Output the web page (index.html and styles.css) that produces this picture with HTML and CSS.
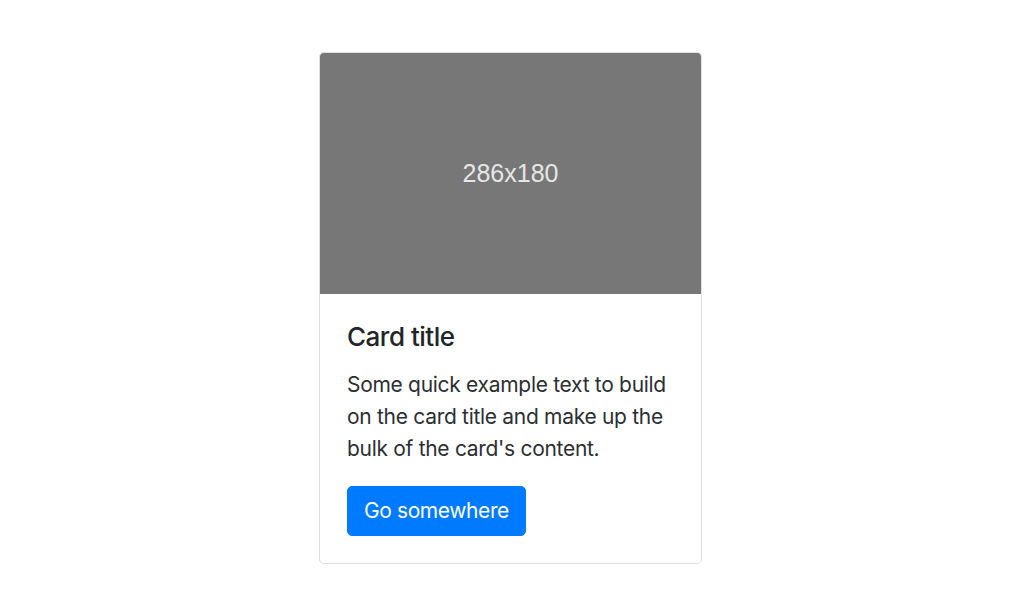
FILE: index.html
```html
<!DOCTYPE html>
<html lang="en">
<head>
    <meta charset="UTF-8">
    <meta name="viewport" content="width=device-width, initial-scale=1.0">
    <title>Card</title>
    <link rel="stylesheet" href="styles.css">
</head>
<body>

    <div class="page">
        <div class="card">
            <div class="card-img">286x180</div>
            <div class="card-body">
                <h5 class="card-title">Card title</h5>
                <p class="card-text">Some quick example text to build on the card title and make up the bulk of the card's content.</p>
                <a href="#" class="btn">Go somewhere</a>
            </div>
        </div>
    </div>

</body>
</html>
```

FILE: styles.css
```css
body {
    margin: 0;
    background-color: #fff;
    color: #212529;
    font-family: Inter, "Noto Sans", sans-serif;
}
.page {
    display: flex;
    justify-content: center;
    padding-top: 52px;
    padding-right: 3px;
}
.card {
    width: 383px;
    box-sizing: border-box;
    border: 1px solid rgba(0,0,0,0.125);
    border-radius: 5px;
    overflow: hidden;
    background: #fff;
}
.card-img {
    height: 241px;
    background-color: #777;
    color: #e6e6e6;
    font-family: "Liberation Sans", Arial, sans-serif;
    font-size: 25px;
    display: flex;
    align-items: center;
    justify-content: center;
}
.card-body {
    padding: 27px;
}
.card-title {
    margin: 0 0 16px;
    font-size: 26px;
    font-weight: 500;
    line-height: 32px;
    letter-spacing: -0.5px;
}
.card-text {
    margin: 0 0 21px;
    font-size: 21px;
    line-height: 32px;
    letter-spacing: -0.3px;
    color: #2b2f33;
}
.btn {
    display: inline-block;
    padding: 8px 16px;
    font-size: 21px;
    line-height: 32px;
    letter-spacing: -0.4px;
    color: #fff;
    background-color: #007bff;
    border: 1px solid #007bff;
    border-radius: 5px;
    text-decoration: none;
}
```
